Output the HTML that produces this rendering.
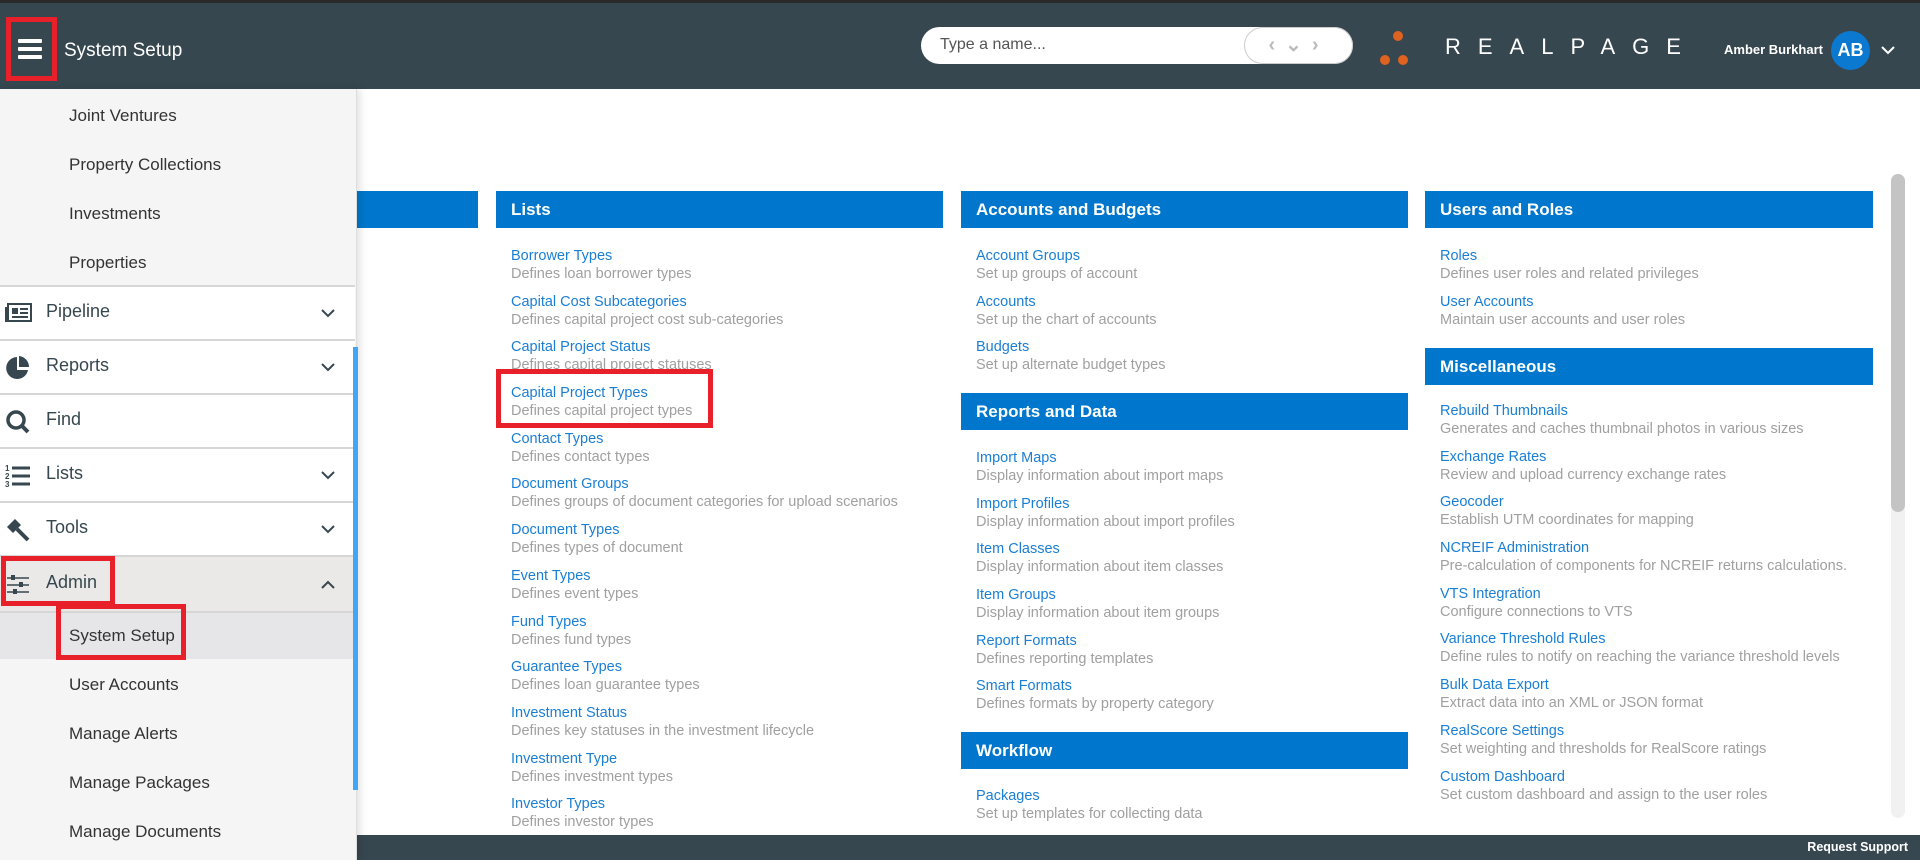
<!DOCTYPE html>
<html><head><meta charset="utf-8"><style>
*{margin:0;padding:0;box-sizing:border-box}
body{width:1920px;height:860px;overflow:hidden;position:relative;background:#fff;font-family:"Liberation Sans",Arial,sans-serif}
.hdr{position:absolute;left:0;top:0;width:1920px;height:89px;background:#37474f;border-top:3px solid #2a2a2a}
.abs{position:absolute}
.bar{position:absolute;height:37px;background:#0077cc;color:#fff;font-weight:bold;font-size:17px;line-height:37px;padding-left:15px}
.col{position:absolute}
.it{height:45.7px;padding-left:15px}
.it a{display:block;color:#1a7fd4;font-size:14.5px;line-height:18px;text-decoration:none}
.it span{display:block;color:#a0a0a0;font-size:14.5px;line-height:18px}
.side{position:absolute;left:0;top:89px;width:357px;height:771px;background:#f5f5f5;box-shadow:3px 0 8px rgba(0,0,0,.12);border-right:1px solid #ddd}
.sub{position:absolute;left:69px;font-size:17px;color:#333}
.row{position:absolute;left:0;width:355px;height:54px;border-top:2px solid #d6d6d6;background:#fff}
.row .lb{position:absolute;left:46px;top:14px;font-size:18px;color:#37474f}
.row svg.ic{position:absolute;left:5px;top:14px}
.row .ch{position:absolute;left:320px;top:20px}
.red{position:absolute;border:5px solid #e8202a}
</style></head><body>
<div class="hdr">
  <div class="red" style="left:6px;top:14px;width:51px;height:64px"></div>
  <div class="abs" style="left:18px;top:36px;width:24px;height:4px;background:#fff;border-radius:1px"></div>
  <div class="abs" style="left:18px;top:44px;width:24px;height:4px;background:#fff;border-radius:1px"></div>
  <div class="abs" style="left:18px;top:52px;width:24px;height:4px;background:#fff;border-radius:1px"></div>
  <div class="abs" style="left:64px;top:37px;color:#fff;font-size:19px">System Setup</div>
  <div class="abs" style="left:921px;top:24px;width:432px;height:37px;background:#fff;border-radius:19px"></div>
  <div class="abs" style="left:940px;top:33px;color:#555;font-size:16px">Type a name...</div>
  <div class="abs" style="left:1244px;top:24px;width:109px;height:37px;border:1px solid #ccc;border-radius:19px;color:#bbb;font-size:20px;font-weight:bold;line-height:34px;text-align:center;letter-spacing:10px">‹⌄›</div>
  <svg class="abs" style="left:1378px;top:24px" width="44" height="40"><circle cx="20" cy="9" r="5" fill="#e0621f"/><circle cx="7" cy="33" r="5" fill="#e0621f"/><circle cx="25" cy="33" r="5" fill="#e0621f"/></svg>
  <div class="abs" style="left:1445px;top:31px;color:#fff;font-size:22px;letter-spacing:17px">REALPAGE</div>
  <div class="abs" style="left:1724px;top:39px;color:#fff;font-size:13px;font-weight:bold">Amber Burkhart</div>
  <div class="abs" style="left:1831px;top:28px;width:39px;height:39px;border-radius:50%;background:#0c79d1;color:#fff;font-weight:bold;font-size:18px;line-height:39px;text-align:center">AB</div>
  <svg class="abs" style="left:1880px;top:41px" width="16" height="12"><path d="M2 3l6 6 6-6" stroke="#fff" stroke-width="2" fill="none"/></svg>
</div>

<div class="bar" style="left:300px;top:191px;width:178px"></div>
<div class="bar" style="left:496px;top:191px;width:447px">Lists</div>
<div class="bar" style="left:961px;top:191px;width:447px">Accounts and Budgets</div>
<div class="bar" style="left:1425px;top:191px;width:448px">Users and Roles</div>
<div class="col" style="left:496px;top:247px;width:447px">
<div class="it"><a>Borrower Types</a><span>Defines loan borrower types</span></div>
<div class="it"><a>Capital Cost Subcategories</a><span>Defines capital project cost sub-categories</span></div>
<div class="it"><a>Capital Project Status</a><span>Defines capital project statuses</span></div>
<div class="it"><a>Capital Project Types</a><span>Defines capital project types</span></div>
<div class="it"><a>Contact Types</a><span>Defines contact types</span></div>
<div class="it"><a>Document Groups</a><span>Defines groups of document categories for upload scenarios</span></div>
<div class="it"><a>Document Types</a><span>Defines types of document</span></div>
<div class="it"><a>Event Types</a><span>Defines event types</span></div>
<div class="it"><a>Fund Types</a><span>Defines fund types</span></div>
<div class="it"><a>Guarantee Types</a><span>Defines loan guarantee types</span></div>
<div class="it"><a>Investment Status</a><span>Defines key statuses in the investment lifecycle</span></div>
<div class="it"><a>Investment Type</a><span>Defines investment types</span></div>
<div class="it"><a>Investor Types</a><span>Defines investor types</span></div>
</div>
<div class="red" style="left:496px;top:369px;width:217px;height:59px"></div>
<div class="col" style="left:961px;top:247px;width:447px">
<div class="it"><a>Account Groups</a><span>Set up groups of account</span></div>
<div class="it"><a>Accounts</a><span>Set up the chart of accounts</span></div>
<div class="it"><a>Budgets</a><span>Set up alternate budget types</span></div>
</div>
<div class="bar" style="left:961px;top:393px;width:447px">Reports and Data</div>
<div class="col" style="left:961px;top:449px;width:447px">
<div class="it"><a>Import Maps</a><span>Display information about import maps</span></div>
<div class="it"><a>Import Profiles</a><span>Display information about import profiles</span></div>
<div class="it"><a>Item Classes</a><span>Display information about item classes</span></div>
<div class="it"><a>Item Groups</a><span>Display information about item groups</span></div>
<div class="it"><a>Report Formats</a><span>Defines reporting templates</span></div>
<div class="it"><a>Smart Formats</a><span>Defines formats by property category</span></div>
</div>
<div class="bar" style="left:961px;top:732px;width:447px">Workflow</div>
<div class="col" style="left:961px;top:787px;width:447px">
<div class="it"><a>Packages</a><span>Set up templates for collecting data</span></div>
</div>
<div class="col" style="left:1425px;top:247px;width:448px">
<div class="it"><a>Roles</a><span>Defines user roles and related privileges</span></div>
<div class="it"><a>User Accounts</a><span>Maintain user accounts and user roles</span></div>
</div>
<div class="bar" style="left:1425px;top:348px;width:448px">Miscellaneous</div>
<div class="col" style="left:1425px;top:402px;width:448px">
<div class="it"><a>Rebuild Thumbnails</a><span>Generates and caches thumbnail photos in various sizes</span></div>
<div class="it"><a>Exchange Rates</a><span>Review and upload currency exchange rates</span></div>
<div class="it"><a>Geocoder</a><span>Establish UTM coordinates for mapping</span></div>
<div class="it"><a>NCREIF Administration</a><span>Pre-calculation of components for NCREIF returns calculations.</span></div>
<div class="it"><a>VTS Integration</a><span>Configure connections to VTS</span></div>
<div class="it"><a>Variance Threshold Rules</a><span>Define rules to notify on reaching the variance threshold levels</span></div>
<div class="it"><a>Bulk Data Export</a><span>Extract data into an XML or JSON format</span></div>
<div class="it"><a>RealScore Settings</a><span>Set weighting and thresholds for RealScore ratings</span></div>
<div class="it"><a>Custom Dashboard</a><span>Set custom dashboard and assign to the user roles</span></div>
</div>
<div class="abs" style="left:1891px;top:174px;width:14px;height:644px;background:#f1f1f1;border-radius:7px"></div>
<div class="abs" style="left:1891px;top:174px;width:14px;height:338px;background:#c4c4c4;border-radius:7px"></div>

<div class="abs" style="left:0;top:835px;width:1920px;height:25px;background:#37474f"></div>
<div class="abs" style="right:12px;top:840px;color:#fff;font-size:12.5px;font-weight:bold">Request Support</div>

<div class="side">
  <div class="sub" style="top:17px">Joint Ventures</div>
  <div class="sub" style="top:66px">Property Collections</div>
  <div class="sub" style="top:115px">Investments</div>
  <div class="sub" style="top:164px">Properties</div>
  <div class="row" style="top:196px"><svg class="ic" width="28" height="24" viewBox="0 0 28 24"><rect x="3" y="3" width="23" height="17" fill="none" stroke="#37474f" stroke-width="2"/><path d="M1 6v14h2" stroke="#37474f" stroke-width="2" fill="none"/><rect x="7" y="7" width="6" height="6" fill="#37474f"/><path d="M15 8h8M15 12h8M7 16h16" stroke="#37474f" stroke-width="2"/></svg><span class="lb">Pipeline</span><svg class="ch" width="16" height="12"><path d="M2 3l6 6 6-6" stroke="#37474f" stroke-width="2" fill="none"/></svg></div>
  <div class="row" style="top:250px"><svg class="ic" width="26" height="26" viewBox="0 0 26 26"><path d="M12 2a11 11 0 1 0 11 13H12z" fill="#37474f"/><path d="M14 1v11h10A11 11 0 0 0 14 1z" fill="#37474f"/></svg><span class="lb">Reports</span><svg class="ch" width="16" height="12"><path d="M2 3l6 6 6-6" stroke="#37474f" stroke-width="2" fill="none"/></svg></div>
  <div class="row" style="top:304px"><svg class="ic" width="26" height="26" viewBox="0 0 26 26"><circle cx="11" cy="11" r="8" fill="none" stroke="#37474f" stroke-width="3.5"/><path d="M17 17l6 6" stroke="#37474f" stroke-width="4"/></svg><span class="lb">Find</span></div>
  <div class="row" style="top:358px"><svg class="ic" width="28" height="26" viewBox="0 0 28 26"><text x="0" y="8" font-size="8" font-weight="bold" fill="#37474f" font-family="Liberation Sans">1</text><text x="0" y="16" font-size="8" font-weight="bold" fill="#37474f" font-family="Liberation Sans">2</text><text x="0" y="24" font-size="8" font-weight="bold" fill="#37474f" font-family="Liberation Sans">3</text><path d="M7 5h18M7 13h18M7 21h18" stroke="#37474f" stroke-width="3"/></svg><span class="lb">Lists</span><svg class="ch" width="16" height="12"><path d="M2 3l6 6 6-6" stroke="#37474f" stroke-width="2" fill="none"/></svg></div>
  <div class="row" style="top:412px"><svg class="ic" width="26" height="26" viewBox="0 0 26 26"><path d="M2 10l8-8 6 6-8 8z" fill="#37474f"/><path d="M12 12l11 11" stroke="#37474f" stroke-width="4"/></svg><span class="lb">Tools</span><svg class="ch" width="16" height="12"><path d="M2 3l6 6 6-6" stroke="#37474f" stroke-width="2" fill="none"/></svg></div>
  <div class="row" style="top:466px;height:56px;background:#ebe9e7"><svg class="ic" width="26" height="24" viewBox="0 0 26 24" style="top:16px"><path d="M2 5h22M2 12h22M2 19h22" stroke="#37474f" stroke-width="1.6"/><rect x="6" y="2" width="4" height="5" fill="#37474f"/><rect x="14" y="9" width="4" height="5" fill="#37474f"/><rect x="8" y="16" width="4" height="5" fill="#37474f"/></svg><span class="lb" style="top:15px">Admin</span><svg class="ch" width="16" height="12" style="top:22px"><path d="M2 9l6-6 6 6" stroke="#37474f" stroke-width="2" fill="none"/></svg></div>
  <div class="abs" style="left:0;top:522px;width:355px;height:48px;background:#e6e6e8;border-top:2px solid #d6d6d6"></div>
  <div class="sub" style="top:537px">System Setup</div>
  <div class="sub" style="top:586px">User Accounts</div>
  <div class="sub" style="top:635px">Manage Alerts</div>
  <div class="sub" style="top:684px">Manage Packages</div>
  <div class="sub" style="top:733px">Manage Documents</div>
  <div class="abs" style="left:353px;top:258px;width:5px;height:443px;background:#42a5f5"></div>
</div>
<div class="red" style="left:1px;top:556px;width:114px;height:50px"></div>
<div class="red" style="left:56px;top:604px;width:130px;height:56px"></div>
</body></html>
